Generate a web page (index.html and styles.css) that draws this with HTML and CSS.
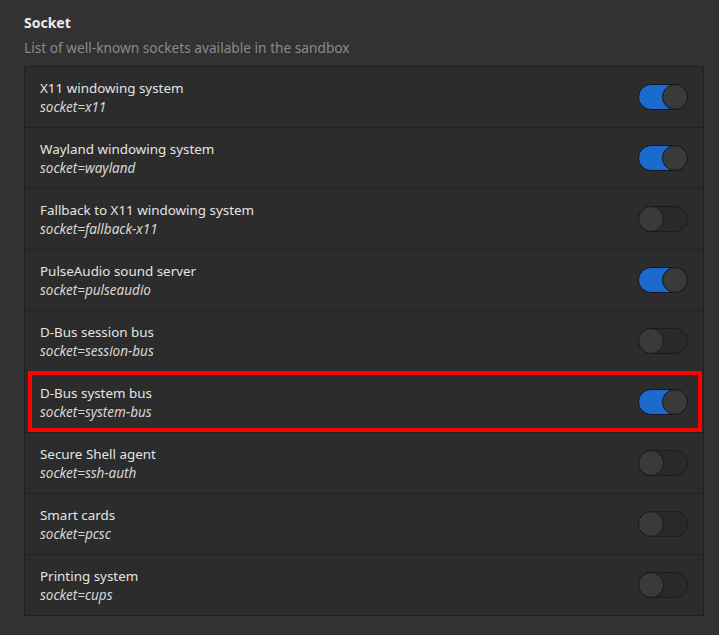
FILE: index.html
```html
<!DOCTYPE html>
<html lang="en">
<head>
    <meta charset="UTF-8">
    <meta name="viewport" content="width=device-width, initial-scale=1.0">
    <link rel="stylesheet" href="styles.css">
    <title>Socket</title>
</head>
<body>
    <div class="section">
        <h2 class="section-title">Socket</h2>
        <p class="section-desc">List of well-known sockets available in the sandbox</p>

        <div class="list">
            <div class="row">
                <div class="labels">
                    <span class="name">X11 windowing system</span>
                    <span class="key">socket=x11</span>
                </div>
                <span class="switch on"></span>
            </div>
            <div class="row">
                <div class="labels">
                    <span class="name">Wayland windowing system</span>
                    <span class="key">socket=wayland</span>
                </div>
                <span class="switch on"></span>
            </div>
            <div class="row">
                <div class="labels">
                    <span class="name">Fallback to X11 windowing system</span>
                    <span class="key">socket=fallback-x11</span>
                </div>
                <span class="switch"></span>
            </div>
            <div class="row">
                <div class="labels">
                    <span class="name">PulseAudio sound server</span>
                    <span class="key">socket=pulseaudio</span>
                </div>
                <span class="switch on"></span>
            </div>
            <div class="row">
                <div class="labels">
                    <span class="name">D-Bus session bus</span>
                    <span class="key">socket=session-bus</span>
                </div>
                <span class="switch"></span>
            </div>
            <div class="row highlight">
                <div class="labels">
                    <span class="name">D-Bus system bus</span>
                    <span class="key">socket=system-bus</span>
                </div>
                <span class="switch on"></span>
            </div>
            <div class="row">
                <div class="labels">
                    <span class="name">Secure Shell agent</span>
                    <span class="key">socket=ssh-auth</span>
                </div>
                <span class="switch"></span>
            </div>
            <div class="row">
                <div class="labels">
                    <span class="name">Smart cards</span>
                    <span class="key">socket=pcsc</span>
                </div>
                <span class="switch"></span>
            </div>
            <div class="row">
                <div class="labels">
                    <span class="name">Printing system</span>
                    <span class="key">socket=cups</span>
                </div>
                <span class="switch"></span>
            </div>
        </div>
    </div>
</body>
</html>
```

FILE: styles.css
```css
body {
    margin: 0;
    background-color: #323232;
    font-family: "Noto Sans", "Open Sans", sans-serif;
    color: #e6e6e6;
}

.section {
    padding: 13px 15px 0 24px;
}

.section-title {
    margin: 0;
    font-size: 14px;
    font-weight: 700;
    line-height: 19px;
    color: #ececec;
}

.section-desc {
    margin: 6px 0 0;
    font-size: 13.7px;
    line-height: 19px;
    color: #8a8a8a;
}

.list {
    margin-top: 9px;
    background-color: #2c2c2c;
    border: 1px solid #1f1f1f;
}

.row {
    position: relative;
    display: flex;
    align-items: center;
    justify-content: space-between;
    height: 60px;
    padding: 0 15px;
    border-top: 1px solid #222;
}

.row:first-child {
    border-top: none;
}

.highlight::after {
    content: "";
    position: absolute;
    top: -1px;
    left: 3px;
    right: 1px;
    height: 61px;
    border: 4px solid #ff0000;
    box-sizing: border-box;
}

.labels {
    display: flex;
    flex-direction: column;
    padding-top: 2px;
}

.name {
    font-size: 13.4px;
    line-height: 19px;
    color: #e4e4e4;
}

.key {
    font-size: 13.5px;
    font-style: italic;
    line-height: 19px;
    color: #d6d6d6;
}

.switch {
    position: relative;
    width: 48px;
    height: 24px;
    border-radius: 13px;
    background-color: #292929;
    border: 1px solid #1c1c1c;
}

.switch::before {
    content: "";
    position: absolute;
    top: -1px;
    left: -1px;
    width: 24px;
    height: 24px;
    border-radius: 50%;
    background-color: #3a3a3a;
    border: 1px solid #1a1a1a;
}

.switch.on {
    background-color: #1c6acd;
    border-color: #0e1828;
}

.switch.on::before {
    left: auto;
    right: -1px;
    border-color: #0e1828;
}
```
